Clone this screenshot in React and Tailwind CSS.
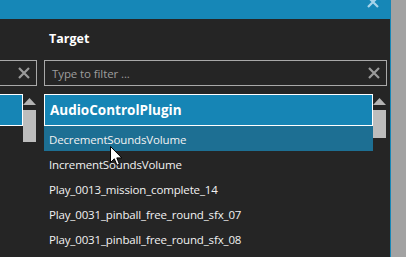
import React from 'react'

const items = [
  'IncrementSoundsVolume',
  'Play_0013_mission_complete_14',
  'Play_0031_pinball_free_round_sfx_07',
  'Play_0031_pinball_free_round_sfx_08',
]

function CloseIcon({ className }) {
  return (
    <svg width="12" height="12" viewBox="0 0 12 12" className={className}>
      <path d="M1 1 L11 11 M11 1 L1 11" stroke="currentColor" strokeWidth="2.2" fill="none" />
    </svg>
  )
}

function ScrollBar({ thumb }) {
  return (
    <div className="flex w-[13px] shrink-0 flex-col items-center pt-[4px]">
      <svg width="13" height="7" viewBox="0 0 13 7" className="text-[#b4b4b4]">
        <path d="M6.5 0 L13 7 L0 7 Z" fill="currentColor" />
      </svg>
      <div className={`mt-[5px] w-[13px] bg-[#bdbdbd] ${thumb}`} />
    </div>
  )
}

function Cursor() {
  return (
    <svg
      width="13"
      height="21"
      viewBox="0 0 13 21"
      className="pointer-events-none absolute left-[110px] top-[146px]"
    >
      <path
        d="M0.5 0.5 L0.5 16.5 L4.3 12.8 L7 19.2 L9.4 18.2 L6.8 11.9 L11.8 11.9 Z"
        fill="#ffffff"
        stroke="#000000"
        strokeWidth="1"
      />
    </svg>
  )
}

export default function App() {
  return (
    <div
      className="relative flex h-[257px] w-[406px] overflow-hidden bg-[#a2a2a2] text-white"
      style={{ fontFamily: '"Open Sans", "Noto Sans", "Liberation Sans", sans-serif' }}
    >
      <div className="flex w-[391px] shrink-0 flex-col border-r border-[#1687b7] bg-[#252525]">
        {/* Title bar */}
        <div className="relative h-[19px] shrink-0 bg-[#1687b7]">
          <CloseIcon className="absolute right-[11px] top-[-4px] text-[#a7d4ea]" />
        </div>

        <div className="flex flex-1 gap-[7px]">
          {/* Source panel (cut off) */}
          <div className="flex w-[37px] shrink-0 flex-col">
            <div className="h-[41px]" />
            <div className="flex h-[26px] items-center justify-end border-y border-r border-[#a9a9a9] pr-[6px]">
              <CloseIcon className="text-[#9a9a9a]" />
            </div>
            <div className="mt-[8px] flex">
              <div className="h-[32px] w-[23px] border-y border-r border-white bg-[#1685b5]" />
              <ScrollBar thumb="h-[32px]" />
            </div>
          </div>

          {/* Target panel */}
          <div className="flex w-[343px] shrink-0 flex-col">
            <div className="h-[41px] pl-[5px] pt-[11px] text-[12.5px] font-bold leading-[18px]">Target</div>
            <div className="flex h-[26px] items-center justify-between border border-[#a9a9a9] pl-[7px] pr-[6px]">
              <span className="pt-[1px] text-[11.5px] tracking-[-0.1px] text-[#9d9d9d]">Type to filter ...</span>
              <CloseIcon className="text-[#9a9a9a]" />
            </div>
            <div className="mt-[8px] flex">
              <div className="flex w-[329px] shrink-0 flex-col">
                <div className="flex h-[32px] items-center border border-white bg-[#1685b5] pl-[5px] pt-[1px] text-[13.5px] font-bold">
                  AudioControlPlugin
                </div>
                <div className="flex h-[25px] items-center bg-[#1d6f93] pl-[5px] pt-[2px] text-[11.5px] tracking-[-0.15px] text-[#f2f2f2]">
                  DecrementSoundsVolume
                </div>
                {items.map((item) => (
                  <div
                    key={item}
                    className="flex h-[25px] items-center pl-[5px] pt-[2px] text-[11.5px] tracking-[-0.15px] text-[#f2f2f2]"
                  >
                    {item}
                  </div>
                ))}
              </div>
              <ScrollBar thumb="h-[28px]" />
            </div>
          </div>
        </div>
      </div>
      <Cursor />
    </div>
  )
}
